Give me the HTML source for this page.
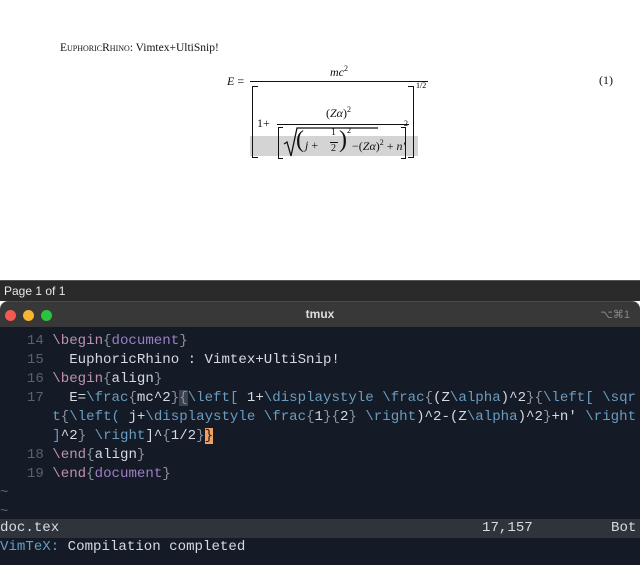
<!DOCTYPE html><html><head><style>
body{margin:0;width:640px;height:565px;overflow:hidden;background:#fff;position:relative;font-family:"Liberation Serif",serif}
.a{position:absolute;white-space:nowrap}
.m{font-family:"Liberation Serif",serif;color:#111}
.i{font-style:italic}
#pg{position:absolute;left:0;top:280px;width:640px;height:21px;background:#2a2a2a;border-top:1px solid #555;color:#e8e8e8;font:12px "Liberation Sans",sans-serif;line-height:20px;padding-left:4px;box-sizing:border-box}
#tb{position:absolute;left:0;top:301px;width:640px;height:26px;background:#383838;border-top:1px solid #4a4a4a;border-radius:8px 8px 0 0}
.dot{position:absolute;top:8px;width:11px;height:11px;border-radius:50%}
#ed{position:absolute;left:0;top:327px;width:640px;height:238px;background:#141b26;font-family:"Liberation Mono",monospace;font-size:14.1px;color:#d5d9e0}
.l{position:absolute;left:10px;white-space:pre;height:19px;line-height:19px}
.n{color:#5a606c}.k{color:#c08fb2}.p{color:#9c7fc4}.b{color:#8b919b}.f{color:#6a9cc0}
</style></head><body>
<div class="a" style="left:60px;top:42px;font-size:11.5px;color:#111"><span style="font-variant:small-caps">EuphoricRhino</span>: Vimtex+UltiSnip!</div>
<div class="a m i" style="left:227px;top:74px;font-size:12px">E <span style="font-style:normal">=</span></div>
<div class="a m i" style="left:330px;top:64px;font-size:12px">mc<sup style="font-size:8px;font-style:normal">2</sup></div>
<div class="a" style="left:250px;top:81px;width:178px;border-top:1px solid #111"></div>
<div class="a" style="left:599px;top:73px;font-size:12px;color:#111">(1)</div>
<div class="a" style="left:250px;top:136px;width:168px;height:20px;background:#d4d4d4"></div>
<div class="a" style="left:252px;top:86px;width:5px;height:70px;border:1px solid #111;border-right:none"></div>
<div class="a" style="left:408px;top:86px;width:5px;height:70px;border:1px solid #111;border-left:none"></div>
<div class="a" style="left:416px;top:81px;font-size:8px">1/2</div>
<div class="a m" style="left:257px;top:116px;font-size:12px">1+</div>
<div class="a m" style="left:326px;top:105px;font-size:12px">(<i>Zα</i>)<sup style="font-size:8px">2</sup></div>
<div class="a" style="left:277px;top:124px;width:132px;border-top:1px solid #111"></div>
<div class="a" style="left:278px;top:127px;width:4px;height:30px;border:1px solid #111;border-right:none"></div>
<div class="a" style="left:401px;top:127px;width:4px;height:30px;border:1px solid #111;border-left:none"></div>
<div class="a" style="left:404px;top:119px;font-size:8px">2</div>
<svg class="a" style="left:283px;top:126px" width="110" height="32"><path d="M1 18 L4 16 L8 30 L14 2 L95 2" fill="none" stroke="#111" stroke-width="1.3"/></svg>
<div class="a m" style="left:296px;top:127px;font-size:24px">(</div>
<div class="a m i" style="left:305px;top:138px;font-size:12px">j <span style="font-style:normal">+</span></div>
<div class="a m" style="left:331px;top:127px;font-size:10px">1</div>
<div class="a" style="left:330px;top:142px;width:8px;border-top:1px solid #111"></div>
<div class="a m" style="left:331px;top:143px;font-size:10px">2</div>
<div class="a m" style="left:339px;top:127px;font-size:24px">)</div>
<div class="a" style="left:347px;top:126px;font-size:8px">2</div>
<div class="a m" style="left:352px;top:138px;font-size:12px">−(<i>Zα</i>)<sup style="font-size:8px">2</sup> + <i>n′</i></div>
<div id="pg">Page 1 of 1</div>
<div id="tb"><div class="dot" style="left:5px;background:#f25a52"></div><div class="dot" style="left:23px;background:#f6b631"></div><div class="dot" style="left:41px;background:#2bc33f"></div>
<div class="a" style="left:0;width:640px;text-align:center;top:5px;color:#ddd;font:bold 12px 'Liberation Sans',sans-serif">tmux</div>
<div class="a" style="right:10px;top:6px;color:#888;font:11px 'Liberation Sans',sans-serif">⌥⌘1</div></div>
<div id="ed">
<div class="l" style="top:5px"><span class="n">  14 </span><span class="k">\begin</span><span class="b">{</span><span class="p">document</span><span class="b">}</span></div>
<div class="l" style="top:24px"><span class="n">  15 </span>  EuphoricRhino : Vimtex+UltiSnip!</div>
<div class="l" style="top:43px"><span class="n">  16 </span><span class="k">\begin</span><span class="b">{</span>align<span class="b">}</span></div>
<div class="l" style="top:62px"><span class="n">  17 </span>  E=<span class="f">\frac</span><span class="b">{</span>mc^2<span class="b">}</span><span class="b" style="background:#3a4150">{</span><span class="f">\left[</span> 1+<span class="f">\displaystyle</span> <span class="f">\frac</span><span class="b">{</span>(Z<span class="f">\alpha</span>)^2<span class="b">}{</span><span class="f">\left[</span> <span class="f">\sqr</span></div>
<div class="l" style="top:81px">     <span class="f">t</span><span class="b">{</span><span class="f">\left(</span> j+<span class="f">\displaystyle</span> <span class="f">\frac</span><span class="b">{</span>1<span class="b">}{</span>2<span class="b">}</span> <span class="f">\right</span>)^2-(Z<span class="f">\alpha</span>)^2<span class="b">}</span>+n' <span class="f">\right</span></div>
<div class="l" style="top:100px">     <span class="f">]</span>^2<span class="b">}</span> <span class="f">\right</span>]^<span class="b">{</span>1/2<span class="b">}</span><span style="background:#f0a060;color:#141b26">}</span></div>
<div class="l" style="top:119px"><span class="n">  18 </span><span class="k">\end</span><span class="b">{</span>align<span class="b">}</span></div>
<div class="l" style="top:138px"><span class="n">  19 </span><span class="k">\end</span><span class="b">{</span><span class="p">document</span><span class="b">}</span></div>
<div class="l n" style="top:157px;left:0">~</div>
<div class="l n" style="top:176px;left:0">~</div>
<div class="l" style="top:192px;left:0;width:640px;background:#2e333c;color:#d8dce4">doc.tex<span style="position:absolute;left:482px">17,157</span><span style="position:absolute;left:611px">Bot</span></div>
<div class="l" style="top:211px;left:0"><span class="f">VimTeX:</span> Compilation completed</div>
</div>
</body></html>
